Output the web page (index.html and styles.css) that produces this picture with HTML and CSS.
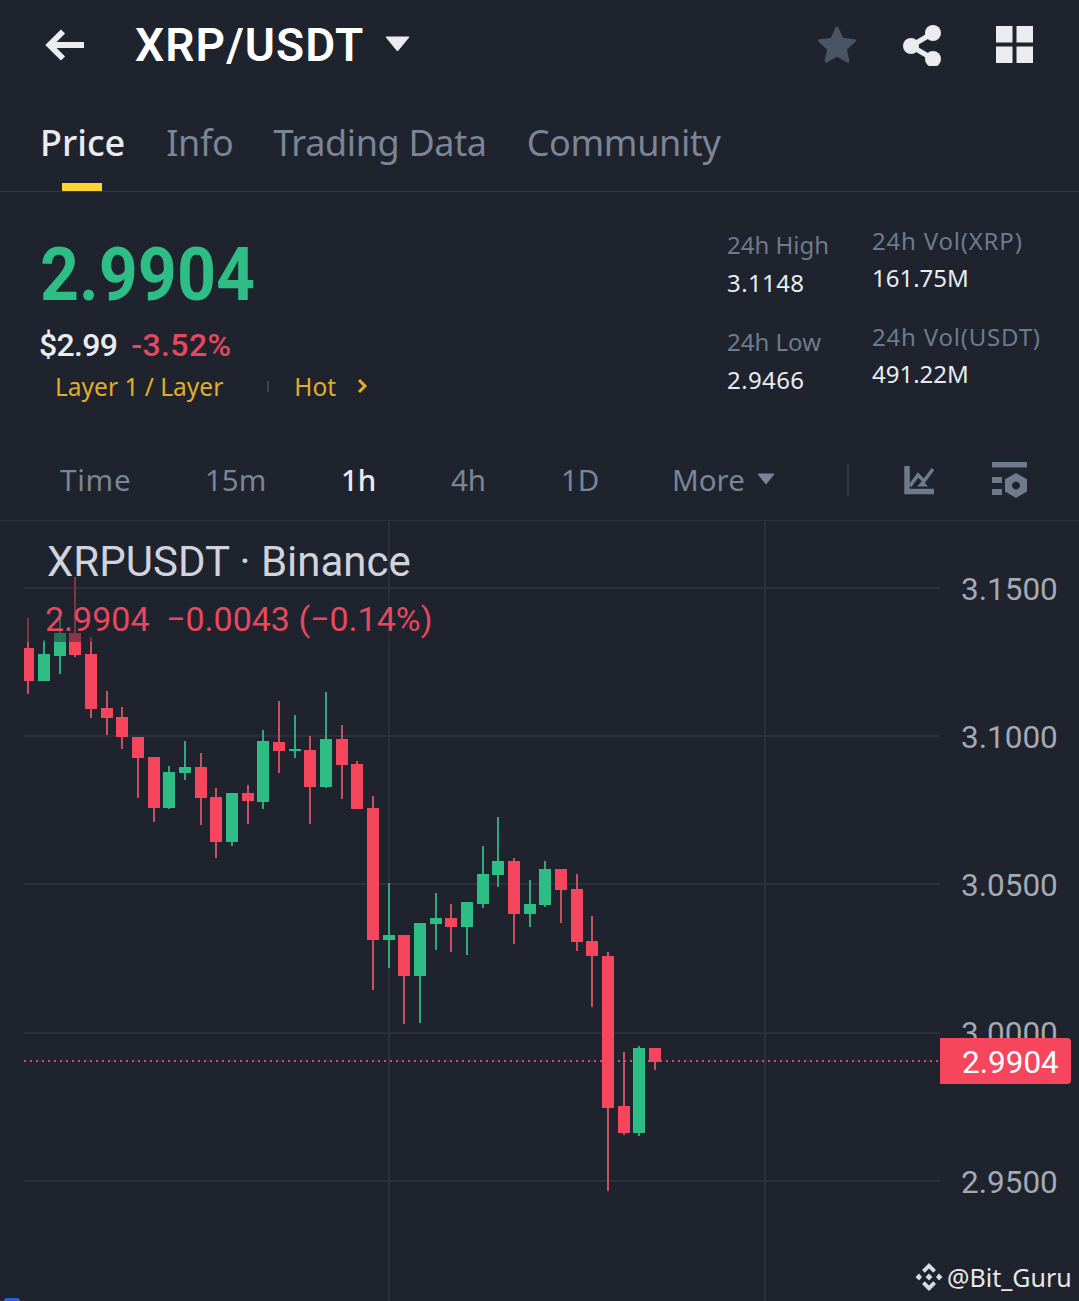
FILE: index.html
```html
<!DOCTYPE html>
<html lang="en">
<head>
<meta charset="utf-8">
<title>XRP/USDT</title>
<link rel="stylesheet" href="styles.css">
</head>
<body>
<div class="app">
  <header class="header">
    <svg class="ico-back" width="40" height="34" viewBox="0 0 40 34"><path d="M39 17H5M18 3.500 4.500 17 18 30.500" fill="none" stroke="#eaecef" stroke-width="6"/></svg>
    <h1 class="pair">XRP/USDT</h1>
    <svg class="ico-caret" width="25" height="16" viewBox="0 0 25 16"><path d="M1 1h23L12.500 15z" fill="#eaecef" stroke="#eaecef" stroke-width="1" stroke-linejoin="round"/></svg>
    <div class="header-actions">
      <svg class="act-star" width="42" height="42" viewBox="0 0 42 42"><path d="M21 4l5.200 11.300 12.300 1.400-9.100 8.300 2.500 12.100L21 31l-10.900 6.100 2.500-12.100-9.100-8.300 12.300-1.400z" fill="#4a5464" stroke="#4a5464" stroke-width="3" stroke-linejoin="round"/></svg>
      <svg class="act-share" width="40" height="42" viewBox="0 0 40 42"><path d="M30 9 8 22l22 13" fill="none" stroke="#eaecef" stroke-width="5"/><circle cx="30" cy="9" r="8" fill="#eaecef"/><circle cx="30" cy="35" r="8" fill="#eaecef"/><circle cx="8" cy="22" r="8" fill="#eaecef"/></svg>
      <svg class="act-grid" width="37" height="38" viewBox="0 0 37 38"><path d="M0 0h16.500v16.500H0zM20.500 0H37v16.500H20.500zM0 20.500h16.500V37H0zM20.500 20.500H37V37H20.500z" fill="#eaecef"/></svg>
    </div>
  </header>

  <nav class="tabs">
    <a class="tab tab-active">Price</a>
    <a class="tab">Info</a>
    <a class="tab">Trading Data</a>
    <a class="tab">Community</a>
  </nav>

  <section class="stats">
    <div class="stats-main">
      <div class="last-price">2.9904</div>
      <div class="sub-price"><span class="usd">$2.99</span><span class="change">-3.52%</span></div>
      <div class="tags">
        <span class="tag-layer">Layer 1 / Layer</span>
        <span class="tag-sep"></span>
        <span class="tag-hot">Hot</span>
        <svg class="tag-chev" width="12" height="16" viewBox="0 0 12 16"><path d="M3 2l6 6-6 6" fill="none" stroke="#e0ae2c" stroke-width="3"/></svg>
      </div>
    </div>
    <div class="stat-col">
      <div class="stat-label">24h High</div>
      <div class="stat-value">3.1148</div>
      <div class="stat-label stat-next">24h Low</div>
      <div class="stat-value">2.9466</div>
    </div>
    <div class="stat-col stat-col-up">
      <div class="stat-label">24h Vol(XRP)</div>
      <div class="stat-value">161.75M</div>
      <div class="stat-label stat-next">24h Vol(USDT)</div>
      <div class="stat-value">491.22M</div>
    </div>
  </section>

  <section class="intervals">
    <span class="iv iv-time">Time</span>
    <span class="iv iv-15">15m</span>
    <span class="iv iv-1h">1h</span>
    <span class="iv iv-4h">4h</span>
    <span class="iv iv-1d">1D</span>
    <span class="iv iv-more">More</span>
    <svg class="iv-caret" width="18" height="12" viewBox="0 0 18 12"><path d="M1 1h16L9 11z" fill="#7b8595" stroke="#7b8595" stroke-linejoin="round"/></svg>
    <span class="iv-sep"></span>
    <svg class="iv-chart" width="30" height="30" viewBox="0 0 30 30"><path d="M3 1v25.500h27" fill="none" stroke="#6f7a8c" stroke-width="5.500"/><path d="M6 21 14 10l6 6 9-12" fill="none" stroke="#6f7a8c" stroke-width="3.500"/><path d="M13 21.500h11l-5.500-6z" fill="#6f7a8c"/></svg>
    <svg class="iv-gear" width="36" height="36" viewBox="0 0 36 36"><path d="M0 0h35v5.500H0zM0 15h10v6H0zM0 27h10v6H0z" fill="#6f7a8c"/><path fill-rule="evenodd" d="M24 11l11 6.200v12.300L24 36l-11-6.500V17.200zM24 19.500a4 4 0 1 0 .01 0z" fill="#6f7a8c"/></svg>
  </section>

  <section class="chart">
    <svg class="plot" width="1079" height="781" viewBox="0 520 1079 781">
      <g class="grid">
        <path d="M0 520H1079M24 588H940M24 736H940M24 884H940M24 1033H940M24 1181H940M389 520V1301M765 520V1301"/>
      </g>
      <text class="axis" x="961" y="600">3.1500</text>
      <text class="axis" x="961" y="748">3.1000</text>
      <text class="axis" x="961" y="896">3.0500</text>
      <text class="axis" x="961" y="1044">3.0000</text>
      <text class="axis" x="961" y="1193">2.9500</text>
      <path class="price-line" d="M24 1061H940"/>

      <g class="dn"><path d="M28 618V694"/><rect x="24" y="648" width="10" height="33"/></g>
      <g class="up"><path d="M44 640V681"/><rect x="38" y="654" width="12" height="27"/></g>
      <g class="up"><path d="M60 618V674"/><rect x="54" y="633" width="12" height="23"/></g>
      <g class="dn"><path class="faint" d="M75 577V597"/><path d="M75 597V657"/><rect x="69" y="633" width="12" height="22"/></g>
      <g class="dn"><path d="M91 637V718"/><rect x="85" y="654" width="12" height="55"/></g>
      <g class="dn"><path d="M107 691V735"/><rect x="101" y="708" width="12" height="10"/></g>
      <g class="dn"><path d="M122 707V749"/><rect x="116" y="717" width="12" height="20"/></g>
      <g class="dn"><path d="M138 737V798"/><rect x="132" y="737" width="12" height="21"/></g>
      <g class="dn"><path d="M154 757V822"/><rect x="148" y="757" width="12" height="51"/></g>
      <g class="up"><path d="M169 766V809"/><rect x="163" y="772" width="12" height="36"/></g>
      <g class="up"><path d="M185 741V780"/><rect x="179" y="767" width="12" height="6"/></g>
      <g class="dn"><path d="M201 753V825"/><rect x="195" y="767" width="12" height="31"/></g>
      <g class="dn"><path d="M216 788V858"/><rect x="210" y="797" width="12" height="45"/></g>
      <g class="up"><path d="M232 793V846"/><rect x="226" y="793" width="12" height="49"/></g>
      <g class="dn"><path d="M248 785V824"/><rect x="242" y="793" width="12" height="8"/></g>
      <g class="up"><path d="M263 730V809"/><rect x="257" y="741" width="12" height="61"/></g>
      <g class="dn"><path d="M279 701V773"/><rect x="273" y="742" width="12" height="9"/></g>
      <g class="up"><path d="M295 715V758"/><rect x="289" y="749" width="12" height="2"/></g>
      <g class="dn"><path d="M310 736V824"/><rect x="304" y="750" width="12" height="37"/></g>
      <g class="up"><path d="M326 692V788"/><rect x="320" y="739" width="12" height="48"/></g>
      <g class="dn"><path d="M342 725V799"/><rect x="336" y="739" width="12" height="26"/></g>
      <g class="dn"><path d="M357 761V809"/><rect x="351" y="764" width="12" height="45"/></g>
      <g class="dn"><path d="M373 796V990"/><rect x="367" y="808" width="12" height="132"/></g>
      <g class="up"><path d="M389 883V968"/><rect x="383" y="935" width="12" height="5"/></g>
      <g class="dn"><path d="M404 935V1024"/><rect x="398" y="935" width="12" height="41"/></g>
      <g class="up"><path d="M420 923V1023"/><rect x="414" y="923" width="12" height="53"/></g>
      <g class="up"><path d="M436 893V950"/><rect x="430" y="918" width="12" height="6"/></g>
      <g class="dn"><path d="M451 904V952"/><rect x="445" y="918" width="12" height="9"/></g>
      <g class="up"><path d="M467 902V955"/><rect x="461" y="902" width="12" height="25"/></g>
      <g class="up"><path d="M483 846V908"/><rect x="477" y="874" width="12" height="30"/></g>
      <g class="up"><path d="M498 817V887"/><rect x="492" y="861" width="12" height="14"/></g>
      <g class="dn"><path d="M514 858V944"/><rect x="508" y="861" width="12" height="53"/></g>
      <g class="up"><path d="M530 880V927"/><rect x="524" y="904" width="12" height="10"/></g>
      <g class="up"><path d="M545 861V907"/><rect x="539" y="869" width="12" height="36"/></g>
      <g class="dn"><path d="M561 869V923"/><rect x="555" y="869" width="12" height="21"/></g>
      <g class="dn"><path d="M577 874V951"/><rect x="571" y="889" width="12" height="53"/></g>
      <g class="dn"><path d="M592 916V1007"/><rect x="586" y="941" width="12" height="15"/></g>
      <g class="dn"><path d="M608 952V1191"/><rect x="602" y="956" width="12" height="152"/></g>
      <g class="dn"><path d="M624 1052V1135"/><rect x="618" y="1106" width="12" height="27"/></g>
      <g class="up"><path d="M639 1046V1136"/><rect x="633" y="1048" width="12" height="85"/></g>
      <g class="dn"><path d="M655 1048V1070"/><rect x="649" y="1048" width="12" height="14"/></g>
    </svg>

    <div class="legend">
      <div class="legend-title">XRPUSDT · Binance</div>
      <div class="legend-ohlc"><span>2.9904</span><span>−0.0043 (−0.14%)</span></div>
    </div>

    <div class="price-tag">2.9904</div>

    <div class="watermark">
      <svg width="28" height="28" viewBox="0 0 28 28"><path d="M14 0l7 7-2.800 2.800L14 5.600 9.800 9.800 7 7zM4 10.500 7 14l-3 3.500L.500 14zM24 10.500 27.500 14 24 17.500 21 14zM14 10.500l3.500 3.500-3.500 3.500-3.500-3.500zM7 21l2.800-2.800 4.200 4.200 4.200-4.200L21 21l-7 7z" fill="#d9dbdf"/></svg>
      <span>@Bit_Guru</span>
    </div>

    <div class="corner-glow"></div>
  </section>
</div>
</body>
</html>
```
FILE: styles.css
```css
* { box-sizing: border-box; }
html, body { margin: 0; padding: 0; background: #1e232e; }
.app {
  width: 1079px;
  height: 1301px;
  overflow: hidden;
  background: #1e232e;
  color: #eaecef;
  font-family: "Noto Sans", "Liberation Sans", sans-serif;
}

/* header */
.header {
  display: flex;
  align-items: center;
  height: 90px;
  padding: 0 46px 0 45px;
}
.ico-back { flex: none; }
.pair {
  margin: 0 0 0 50px;
  font: 600 46px/1 Roboto, sans-serif;
  letter-spacing: 1.100px;
  color: #fff;
}
.ico-caret { margin: -2px 0 0 21px; }
.header-actions {
  display: flex;
  align-items: center;
  margin-left: auto;
}
.act-share { margin-left: 45px; }
.act-grid { margin-left: 53px; }

/* tabs */
.tabs {
  display: flex;
  gap: 40px;
  height: 102px;
  padding: 26px 0 0 40px;
  border-bottom: 1px solid #333a46;
}
.tab {
  position: relative;
  font-size: 36px;
  line-height: 54px;
  letter-spacing: -.35px;
  color: #7b8595;
}
.tab-active { color: #eaecef; font-weight: 500; margin-right: 1px; letter-spacing: 0; }
.tab-active::after {
  content: "";
  position: absolute;
  left: 22px;
  top: 67px;
  width: 40px;
  height: 8px;
  background: #fcd535;
}

/* stats */
.stats {
  display: flex;
  height: 250px;
  padding-left: 41px;
}
.stats-main { width: 686px; padding-top: 47px; }
.last-price {
  margin-left: -1px;
  font: 700 74px/72px Roboto, sans-serif;
  color: #2ebd85;
  transform: scaleX(.92);
  transform-origin: left center;
}
.sub-price {
  display: flex;
  gap: 14px;
  margin-top: 14px;
  font: 500 32px/40px Roboto, sans-serif;
}
.usd { color: #eaecef; margin-left: -2px; letter-spacing: -.7px; }
.change { color: #e5485f; letter-spacing: .4px; }
.tags {
  display: flex;
  align-items: center;
  height: 30px;
  margin-top: 6px;
  padding-left: 14px;
  font-size: 24.500px;
  color: #e0ae2c;
}
.tag-sep {
  width: 2px;
  height: 11px;
  margin: 0 25px 0 44px;
  background: #3c4452;
}
.tag-chev { margin-left: 20px; }
.stat-col { flex: none; width: 145px; padding-top: 36px; white-space: nowrap; }
.stat-col-up { margin-top: -4px; }
.stat-label { font-size: 24px; line-height: 34px; color: #6f7a8c; }
.stat-value { margin-top: 4px; font-size: 24px; line-height: 34px; letter-spacing: .4px; color: #eaecef; }
.stat-next { margin-top: 25px; }
.stat-col-up .stat-label { letter-spacing: .8px; }
.stat-col-up .stat-value { margin-top: 3px; letter-spacing: 0; }

/* interval bar */
.intervals {
  display: flex;
  align-items: center;
  height: 78px;
  padding: 0 0 2px 60px;
  font-size: 29.500px;
  color: #7b8595;
}
.iv { line-height: 44px; }
.iv-time { width: 145px; letter-spacing: .8px; }
.iv-15 { width: 136px; }
.iv-1h { width: 110px; color: #eaecef; font-weight: 500; }
.iv-4h { width: 110px; }
.iv-1d { width: 111px; }
.iv-caret { margin: -3px 0 0 12px; }
.iv-sep { width: 2px; height: 32px; margin-left: 72px; background: #333a46; }
.iv-chart { margin-left: 55px; }
.iv-gear { margin-left: 58px; }

/* chart */
.chart { position: relative; height: 781px; }
.plot { display: block; }
.grid path { fill: none; stroke: #2b303b; stroke-width: 2; }
.axis { font: 400 31.500px Roboto, sans-serif; fill: #a4a9b3; }
.price-line { fill: none; stroke: #d74e62; stroke-width: 2; stroke-dasharray: 2 4; }
.dn rect { fill: #f6465d; }
.dn path { stroke: #c9505f; stroke-width: 2; fill: none; }
.dn path.faint { stroke: #7d3a48; }
.up rect { fill: #2ebd85; }
.up path { stroke: #2fa87c; stroke-width: 2; fill: none; }
.legend {
  position: absolute;
  left: 24px;
  top: 18px;
  padding-left: 23px;
  font-family: Roboto, sans-serif;
}
.legend-title { font-size: 42px; line-height: 48px; color: #d1d4dc; }
.legend-ohlc {
  display: flex;
  gap: 16.500px;
  margin: 11px 0 0 -25px;
  padding: 0 0 1px 23px;
  background: rgba(30, 35, 46, .5);
  font-size: 34px;
  line-height: 44px;
  color: #e5485f;
}
.price-tag {
  position: absolute;
  left: 940px;
  top: 518px;
  width: 131px;
  height: 46px;
  padding-left: 22px;
  border-radius: 0 4px 4px 0;
  background: #f6465d;
  color: #fff;
  font: 400 31.500px/50px Roboto, sans-serif;
}
.watermark {
  position: absolute;
  left: 915px;
  top: 743px;
  display: flex;
  align-items: center;
  gap: 4px;
  font-size: 25px;
  line-height: 28px;
  color: #e6e8ea;
}
.corner-glow {
  position: absolute;
  left: 4px;
  top: 778px;
  width: 16px;
  height: 3px;
  border-radius: 3px 3px 0 0;
  background: #2a5fe0;
}
```
